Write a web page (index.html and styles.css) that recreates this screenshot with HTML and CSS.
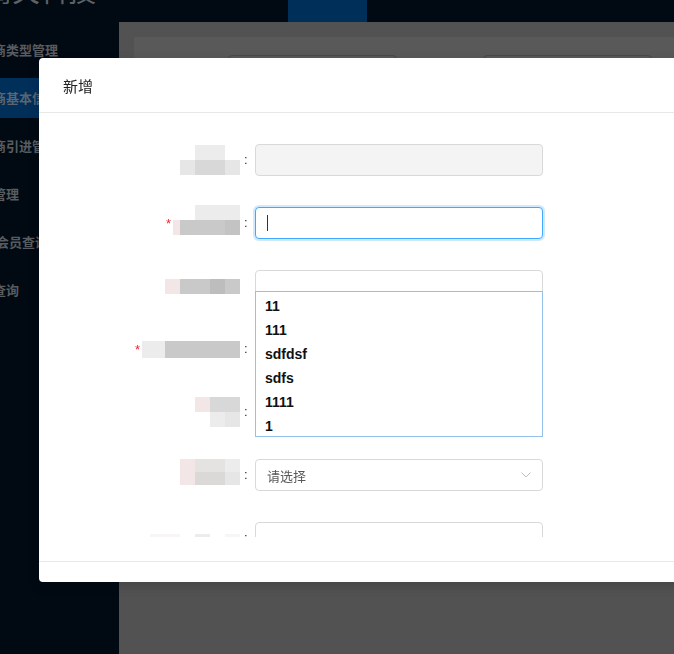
FILE: index.html
```html
<!DOCTYPE html>
<html lang="zh">
<head>
<meta charset="utf-8">
<title>新增</title>
<link rel="stylesheet" href="styles.css">
</head>
<body>
<div class="app">
  <aside class="sider">
    <div class="logo"><div class="logo-text">商关科技</div></div>
    <ul class="menu">
      <li class="mi">商类型管理</li>
      <li class="mi active">商基本信息管理</li>
      <li class="mi">商引进管理</li>
      <li class="mi">管理</li>
      <li class="mi mi-shift">会员查询</li>
      <li class="mi">查询</li>
    </ul>
  </aside>
  <div class="main">
    <header class="top"><div class="tab"></div></header>
    <div class="content">
      <div class="card">
        <div class="fake-input"></div>
        <div class="fake-input"></div>
      </div>
    </div>
  </div>
</div>

<div class="modal">
  <div class="modal-header">新增</div>
  <div class="modal-body">
    <div class="row">
      <div class="label">
        <div class="mz cols4">
          <span></span><span class="s1"></span><span class="s1"></span><span></span>
          <span class="s2"></span><span class="s3"></span><span class="s3"></span><span class="s2"></span>
        </div>
        <span class="colon">:</span>
      </div>
      <div class="input disabled"></div>
    </div>

    <div class="row">
      <div class="label">
        <span class="req">*</span>
        <div class="mz cols-r2 up3">
          <span></span><span></span><span class="s1"></span><span class="s1"></span><span class="s1"></span>
          <span class="p"></span><span class="s4"></span><span class="s4"></span><span class="s4"></span><span class="s4b"></span>
        </div>
        <span class="colon">:</span>
      </div>
      <div class="input focused"><span class="caret"></span></div>
    </div>

    <div class="row">
      <div class="label">
        <div class="mz cols5 single">
          <span class="p"></span><span class="s4"></span><span class="s4"></span><span class="s5"></span><span class="s4"></span>
        </div>
        <span class="colon faint">:</span>
      </div>
      <div class="field">
        <div class="input"></div>
        <ul class="datalist">
          <li>11</li>
          <li>111</li>
          <li>sdfdsf</li>
          <li>sdfs</li>
          <li>1111</li>
          <li>1</li>
        </ul>
      </div>
    </div>

    <div class="row">
      <div class="label">
        <span class="req">*</span>
        <div class="mz cols7 single tall">
          <span class="s1"></span><span class="s1"></span><span class="s4"></span><span class="s4"></span><span class="s4"></span><span class="s4"></span><span class="s4"></span>
        </div>
        <span class="colon">:</span>
      </div>
      <div class="input"></div>
    </div>

    <div class="row">
      <div class="label">
        <div class="mz cols3">
          <span class="p"></span><span class="s3"></span><span class="s3"></span>
          <span></span><span class="s1"></span><span class="s2"></span>
        </div>
        <span class="colon">:</span>
      </div>
      <div class="input"></div>
    </div>

    <div class="row">
      <div class="label">
        <div class="mz cols4 short">
          <span class="p"></span><span class="q1"></span><span class="q1"></span><span class="s1"></span>
          <span class="p"></span><span class="q2"></span><span class="q2"></span><span class="s2"></span>
        </div>
        <span class="colon">:</span>
      </div>
      <div class="input select">
        <span class="placeholder">请选择</span>
        <svg class="chev" width="12" height="8" viewBox="0 0 12 8"><path d="M1.5 1.5 L6 6 L10.5 1.5" fill="none" stroke="#bfbfbf" stroke-width="1"/></svg>
      </div>
    </div>

    <div class="row">
      <div class="label">
        <div class="mz cols6 down">
          <span class="f1"></span><span class="f1"></span><span></span><span class="s1"></span><span></span><span class="f1"></span>
        </div>
        <span class="colon">:</span>
      </div>
      <div class="input"></div>
    </div>
  </div>
  <div class="modal-gap"></div>
  <div class="modal-footer"></div>
</div>
</body>
</html>
```

FILE: styles.css
```css
* { box-sizing: border-box; }
html, body { margin: 0; padding: 0; }
body {
  width: 674px;
  height: 654px;
  overflow: hidden;
  font-family: "Liberation Sans", "Noto Sans CJK SC", sans-serif;
  background: #525252;
}
ul { list-style: none; margin: 0; padding: 0; }

.app { display: flex; height: 654px; }

.sider {
  width: 119px;
  flex: none;
  background: #010a13;
  overflow: hidden;
}
.logo { height: 30px; display: flow-root; }
.logo-text {
  margin-top: -25px;
  line-height: 30px;
  font-size: 28px;
  color: #5e6266;
  white-space: nowrap;
  text-indent: -16px;
  font-family: "Noto Sans CJK SC", sans-serif;
}
.mi {
  height: 40px;
  line-height: 40px;
  margin-bottom: 8px;
  font-size: 13px;
  font-weight: bold;
  color: #585c61;
  white-space: nowrap;
  text-indent: -7px;
  font-family: "Noto Sans CJK SC", sans-serif;
  overflow: hidden;
}
.mi.active { background: #002f5a; color: #5a6570; }
.mi-shift { text-indent: -4px; }

.main { flex: 1; display: flex; flex-direction: column; }
.top { height: 22px; background: #010a13; flex: none; }
.tab { margin-left: 169px; width: 79px; height: 22px; background: #002f5a; }
.content { flex: 1; background: #525252; padding: 15px 0 0 15px; }
.card {
  height: 220px;
  background: #595959;
  padding: 18px 0 0 94px;
  display: flex;
  gap: 86px;
}
.fake-input {
  width: 169px;
  height: 32px;
  border: 1px solid #4a4a4a;
  border-radius: 4px;
}

.modal {
  position: fixed;
  left: 39px;
  top: 58px;
  width: 720px;
  background: #fff;
  border-radius: 4px;
  box-shadow: 0 4px 12px rgba(0,0,0,0.15);
}
.modal-header {
  height: 55px;
  padding: 0 24px;
  display: flex;
  align-items: center;
  font-size: 15px;
  color: #222;
  border-bottom: 1px solid #e8e8e8;
  font-family: "Noto Sans CJK SC", sans-serif;
}
.modal-body {
  height: 424px;
  overflow: hidden;
  padding: 31px 0 0 24px;
}
.modal-gap { height: 24px; }
.modal-footer { height: 21px; border-top: 1px solid #e8e8e8; }

.row {
  display: flex;
  align-items: center;
  height: 32px;
  margin-bottom: 31px;
}
.label {
  width: 192px;
  flex: none;
  display: flex;
  justify-content: flex-end;
  align-items: center;
  padding-right: 7px;
  font-size: 13px;
  color: rgba(0,0,0,0.85);
}
.colon { margin-left: 4px; width: 4px; line-height: 16px; }
.colon.faint { color: transparent; }
.req {
  color: #f5222d;
  font-size: 13px;
  margin-right: 2px;
  line-height: 13px;
}

.mz {
  display: grid;
  grid-auto-rows: 15px;
}
.cols3 { grid-template-columns: 15px 15px 15px; }
.cols4 { grid-template-columns: repeat(4, 15px); }
.cols5 { grid-template-columns: repeat(5, 15px); }
.cols6 { grid-template-columns: 16px 14px 15px 15px 15px 15px; }
.cols7 { grid-template-columns: 8px 15px 15px 15px 15px 15px 15px; }
.cols-r2 { grid-template-columns: 7px 15px 15px 15px 15px; }
.single { grid-auto-rows: 15px; }
.tall { grid-auto-rows: 17px; }
.up3 { margin-top: -6px; }
.short { grid-auto-rows: 13px; margin-top: -6px; }
.down { margin-top: 10px; grid-auto-rows: 18px; }
.mz span { display: block; }
.s1 { background: #ececec; }
.s2 { background: #e6e6e7; }
.s3 { background: #d8d8d8; }
.s4 { background: #c9c9c9; }
.s4b { background: #c3c3c3; }
.s5 { background: #bdbdbd; }
.p { background: #f3e6e6; }
.q1 { background: #e5e2e2; }
.q2 { background: #dbd8d8; }
.f1 { background: #f7f5f5; }

.input {
  width: 288px;
  height: 32px;
  border: 1px solid #d9d9d9;
  border-radius: 4px;
  background: #fff;
  flex: none;
}
.input.disabled { background: #f4f4f4; }
.input.focused {
  border-color: #40a9ff;
  box-shadow: 0 0 0 2px rgba(24,144,255,0.2);
  padding: 7px 0 0 11px;
}
.caret { display: block; width: 1px; height: 16px; background: #333; }

.field { position: relative; width: 288px; height: 32px; }
.datalist {
  position: absolute;
  left: 0;
  top: 21px;
  width: 288px;
  height: 146px;
  padding-top: 2px;
  border: 1px solid #93c1ea;
  background: #fff;
  z-index: 2;
}
.datalist li {
  height: 24px;
  line-height: 24px;
  padding-left: 9px;
  font-size: 14px;
  font-weight: bold;
  color: #111;
}

.select {
  display: flex;
  align-items: center;
  justify-content: space-between;
  padding: 0 10px 0 11px;
}
.placeholder {
  font-size: 13px;
  color: #595959;
  font-family: "Noto Sans CJK SC", sans-serif;
}
.chev { display: block; }
```
